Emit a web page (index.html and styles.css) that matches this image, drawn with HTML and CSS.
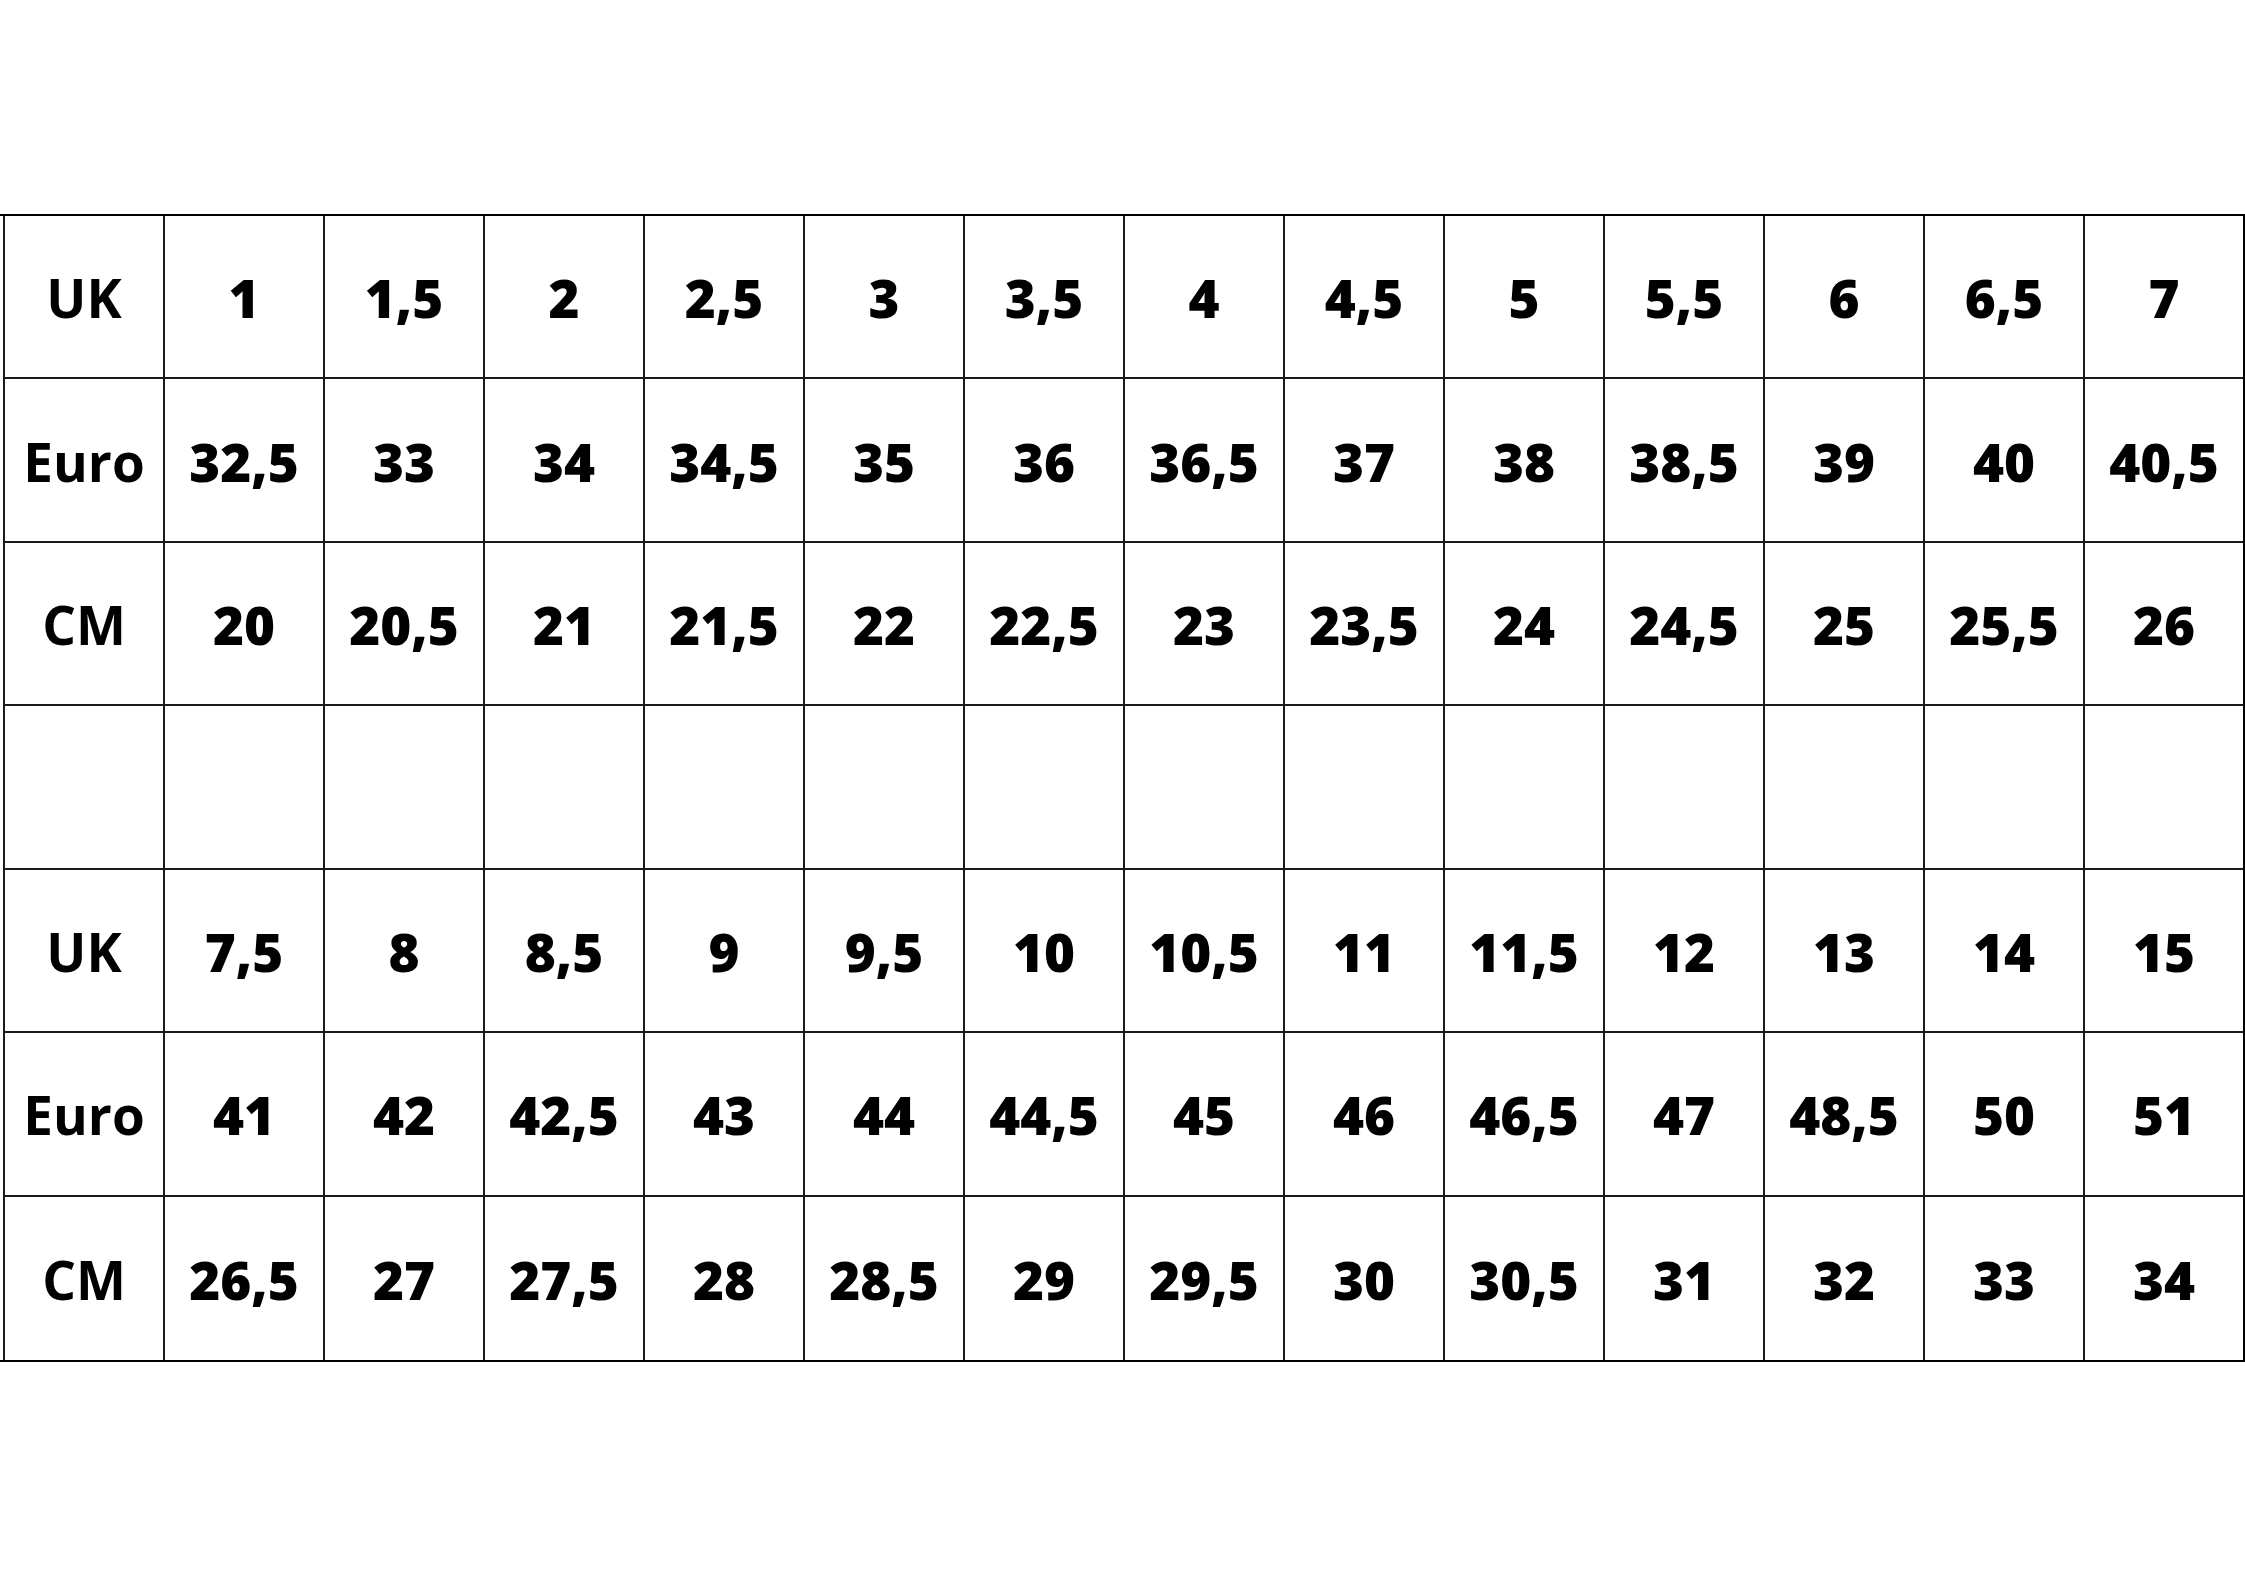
FILE: index.html
```html
<!DOCTYPE html>
<html lang="en">
<head>
<meta charset="utf-8">
<title>Size chart</title>
<link rel="stylesheet" href="styles.css">
</head>
<body>
<div class="chart">
  <div class="cell lbl">UK</div><div class="cell">1</div><div class="cell">1,5</div><div class="cell">2</div><div class="cell">2,5</div><div class="cell">3</div><div class="cell">3,5</div><div class="cell">4</div><div class="cell">4,5</div><div class="cell">5</div><div class="cell">5,5</div><div class="cell">6</div><div class="cell">6,5</div><div class="cell">7</div>
  <div class="cell lbl">Euro</div><div class="cell">32,5</div><div class="cell">33</div><div class="cell">34</div><div class="cell">34,5</div><div class="cell">35</div><div class="cell">36</div><div class="cell">36,5</div><div class="cell">37</div><div class="cell">38</div><div class="cell">38,5</div><div class="cell">39</div><div class="cell">40</div><div class="cell">40,5</div>
  <div class="cell lbl">CM</div><div class="cell">20</div><div class="cell">20,5</div><div class="cell">21</div><div class="cell">21,5</div><div class="cell">22</div><div class="cell">22,5</div><div class="cell">23</div><div class="cell">23,5</div><div class="cell">24</div><div class="cell">24,5</div><div class="cell">25</div><div class="cell">25,5</div><div class="cell">26</div>
  <div class="cell"></div><div class="cell"></div><div class="cell"></div><div class="cell"></div><div class="cell"></div><div class="cell"></div><div class="cell"></div><div class="cell"></div><div class="cell"></div><div class="cell"></div><div class="cell"></div><div class="cell"></div><div class="cell"></div><div class="cell"></div>
  <div class="cell lbl">UK</div><div class="cell">7,5</div><div class="cell">8</div><div class="cell">8,5</div><div class="cell">9</div><div class="cell">9,5</div><div class="cell">10</div><div class="cell">10,5</div><div class="cell">11</div><div class="cell">11,5</div><div class="cell">12</div><div class="cell">13</div><div class="cell">14</div><div class="cell">15</div>
  <div class="cell lbl">Euro</div><div class="cell">41</div><div class="cell">42</div><div class="cell">42,5</div><div class="cell">43</div><div class="cell">44</div><div class="cell">44,5</div><div class="cell">45</div><div class="cell">46</div><div class="cell">46,5</div><div class="cell">47</div><div class="cell">48,5</div><div class="cell">50</div><div class="cell">51</div>
  <div class="cell lbl last">CM</div><div class="cell last">26,5</div><div class="cell last">27</div><div class="cell last">27,5</div><div class="cell last">28</div><div class="cell last">28,5</div><div class="cell last">29</div><div class="cell last">29,5</div><div class="cell last">30</div><div class="cell last">30,5</div><div class="cell last">31</div><div class="cell last">32</div><div class="cell last">33</div><div class="cell last">34</div>
</div>
</body>
</html>
```

FILE: styles.css
```css
html, body {
  margin: 0;
  padding: 0;
  background: #ffffff;
}

body {
  width: 2245px;
  height: 1587px;
  overflow: hidden;
  font-family: "Open Sans", "Noto Sans", sans-serif;
  color: #000000;
}

.chart {
  margin-top: 214px;
  padding-left: 3px;
  border-top: 2px solid #000;
  border-bottom: 2px solid #000;
  display: grid;
  grid-template-columns: repeat(13, 160px) 162px;
  grid-auto-rows: 163.45px;
}

.cell {
  box-sizing: border-box;
  border-left: 2px solid #1a1a1a;
  border-bottom: 2px solid #1a1a1a;
  display: flex;
  align-items: center;
  justify-content: center;
  font-size: 53px;
  font-weight: 800;
  line-height: 1;
  padding-top: 2px;
}

.cell.lbl {
  font-weight: 700;
}

.cell:nth-child(14n) {
  border-right: 2px solid #000;
}

.cell.last {
  border-bottom: none;
}
```
